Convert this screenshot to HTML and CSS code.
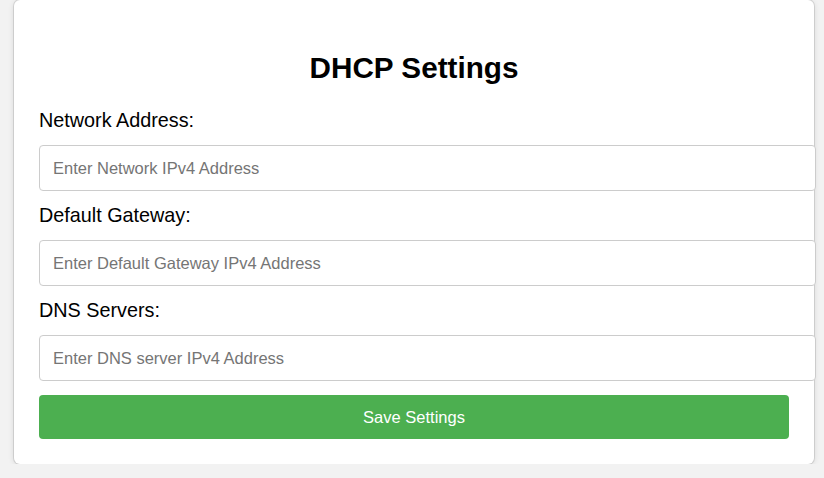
FILE: index.html
```
<!DOCTYPE html>
<html lang="en">
<head>
<meta charset="utf-8">
<title>DHCP Settings</title>
<link rel="stylesheet" href="styles.css">
</head>
<body>
<div class="card">
  <h2 class="title">DHCP Settings</h2>
  <form class="form">
    <label class="label" for="net">Network Address:</label>
    <input class="field" id="net" type="text" placeholder="Enter Network IPv4 Address">
    <label class="label" for="gw">Default Gateway:</label>
    <input class="field" id="gw" type="text" placeholder="Enter Default Gateway IPv4 Address">
    <label class="label" for="dns">DNS Servers:</label>
    <input class="field" id="dns" type="text" placeholder="Enter DNS server IPv4 Address">
    <button class="btn" type="button">Save Settings</button>
  </form>
</div>
</body>
</html>
```
FILE: styles.css
```
html, body {
  margin: 0;
  padding: 0;
}
body {
  background: #f2f2f2;
  font-family: "Liberation Sans", Arial, sans-serif;
  color: #000;
}
.card {
  box-sizing: border-box;
  width: 800px;
  margin: 0 0 0 14px;
  padding: 25px;
  background: #fff;
  border-radius: 6px;
  box-shadow: 0 0 0 1px rgba(0,0,0,0.1), 0 1px 6px rgba(0,0,0,0.12);
}
.title {
  margin: 26px 0 24px;
  font-size: 29.7px;
  font-weight: bold;
  text-align: center;
  line-height: 34px;
}
.form {
  display: flex;
  flex-direction: column;
  align-items: flex-start;
}
.label {
  display: block;
  font-size: 19.8px;
  line-height: 23px;
  margin-bottom: 13px;
}
.field {
  box-sizing: border-box;
  width: 777px;
  height: 46px;
  padding: 0 13px;
  margin: 0 0 13px;
  border: 1px solid #ccc;
  border-radius: 4px;
  font-family: "Liberation Sans", Arial, sans-serif;
  font-size: 16.5px;
  color: #000;
  background: #fff;
}
.field::placeholder {
  color: #757575;
}
.form .field:last-of-type {
  margin-bottom: 14px;
}
.btn {
  box-sizing: border-box;
  width: 750px;
  height: 44px;
  border: 0;
  border-radius: 4px;
  background: #4caf50;
  color: #fff;
  font-family: "Liberation Sans", Arial, sans-serif;
  font-size: 16.5px;
  cursor: pointer;
}
```
